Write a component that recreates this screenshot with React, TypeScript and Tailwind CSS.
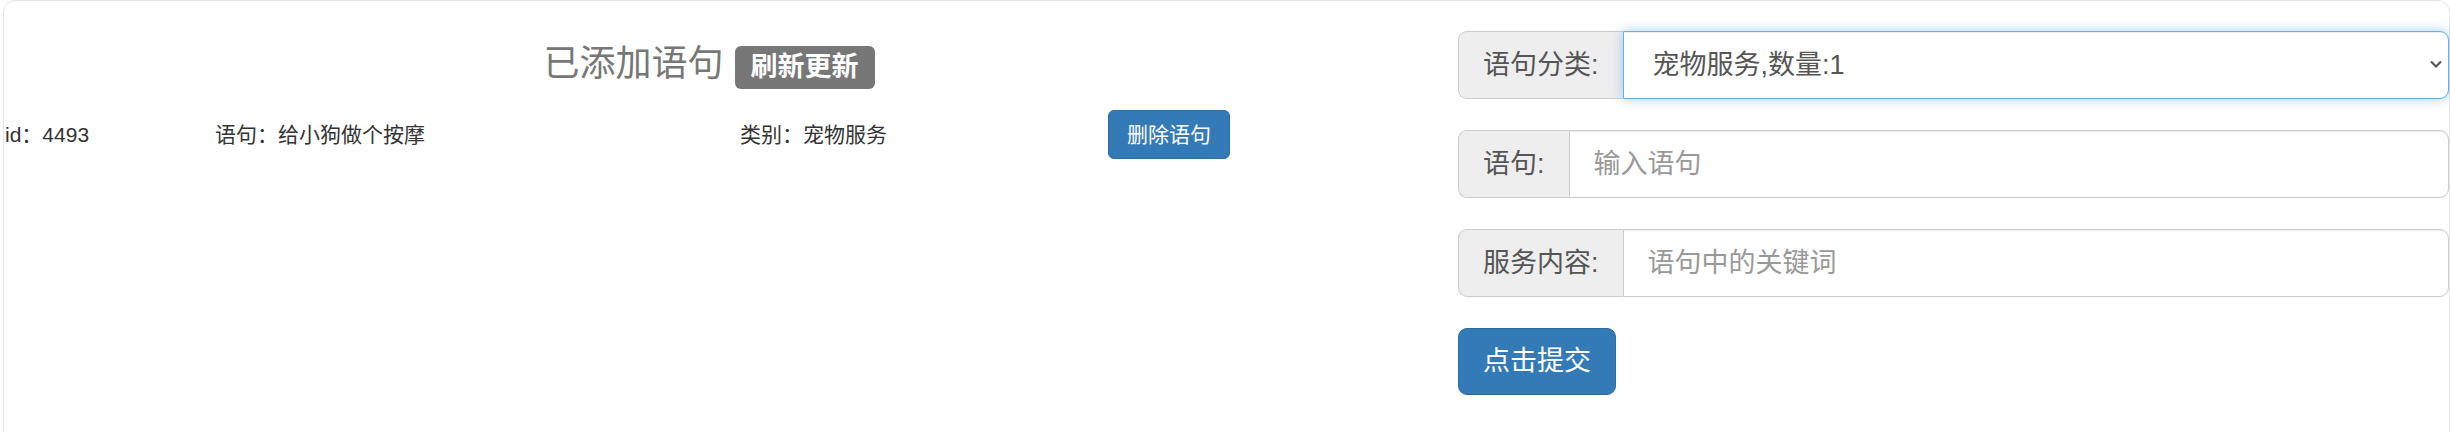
import { useState } from 'react';

const font = 'font-["Liberation_Sans","Noto_Sans_CJK_SC",sans-serif]';

type Sentence = { id: number; text: string; category: string };

const sentences: Sentence[] = [{ id: 4493, text: '给小狗做个按摩', category: '宠物服务' }];

const InputGroup = ({ label, children }: { label: string; children: React.ReactNode }) => (
  <div className="flex h-[68px]">
    <span className="flex items-center px-[24px] bg-[#eeeeee] border border-r-0 border-[#cccccc] rounded-l-[9px] text-[27px] text-[#555555] whitespace-nowrap">
      {label}
    </span>
    {children}
  </div>
);

export default function App() {
  const [category, setCategory] = useState('pet');
  const [sentence, setSentence] = useState('');
  const [keyword, setKeyword] = useState('');

  return (
    <div className={`${font} bg-white min-h-[432px]`}>
      <div className="ml-[3px] min-h-[460px] border border-[#e6e6e6] rounded-[12px] flex">
        {/* added sentences */}
        <div className="w-[1410px] shrink-0">
          <div className="mt-[45px] h-[43px] flex items-center justify-center gap-[11px]">
            <h3 className="text-[36px] leading-none text-[#777777] mb-[8px]">已添加语句</h3>
            <span className="h-[43px] px-[16px] flex items-center bg-[#777777] rounded-[6px] text-white text-[27px] font-bold leading-none">
              刷新更新
            </span>
          </div>
          {sentences.map(s => (
            <div key={s.id} className="mt-[21px] pl-[1px] h-[49px] flex items-center text-[21px] text-[#333333]">
              <span className="w-[210px] shrink-0">id：{s.id}</span>
              <span className="w-[525px] shrink-0">语句：{s.text}</span>
              <span className="w-[368px] shrink-0">类别：{s.category}</span>
              <button className="h-[49px] px-[18px] bg-[#337ab7] border border-[#2e6da4] rounded-[6px] text-white text-[21px]">
                删除语句
              </button>
            </div>
          ))}
        </div>

        {/* add form */}
        <div className="ml-[44px] flex-1 pt-[30px] flex flex-col gap-[31px]">
          <InputGroup label="语句分类:">
            <div className="relative flex-1">
              <select
                value={category}
                onChange={e => setCategory(e.target.value)}
                className="appearance-none w-full h-full pl-[29px] pr-[40px] bg-white border border-[#66afe9] rounded-r-[9px] text-[27px] text-[#555555] outline-none shadow-[inset_0_1px_1px_rgba(0,0,0,0.075),0_0_12px_rgba(102,175,233,0.6)]"
              >
                <option value="pet">宠物服务,数量:1</option>
              </select>
              <svg className="absolute right-[6px] top-[28px] w-[14px] h-[10px] pointer-events-none" viewBox="0 0 14 10">
                <polyline points="2,2.5 7,7.5 12,2.5" fill="none" stroke="#555555" strokeWidth="2.2" />
              </svg>
            </div>
          </InputGroup>
          <InputGroup label="语句:">
            <input
              value={sentence}
              onChange={e => setSentence(e.target.value)}
              placeholder="输入语句"
              className="flex-1 min-w-0 px-[24px] border border-[#cccccc] rounded-r-[9px] text-[27px] text-[#555555] placeholder:text-[#999999] outline-none shadow-[inset_0_1px_1px_rgba(0,0,0,0.075)]"
            />
          </InputGroup>
          <InputGroup label="服务内容:">
            <input
              value={keyword}
              onChange={e => setKeyword(e.target.value)}
              placeholder="语句中的关键词"
              className="flex-1 min-w-0 px-[24px] border border-[#cccccc] rounded-r-[9px] text-[27px] text-[#555555] placeholder:text-[#999999] outline-none shadow-[inset_0_1px_1px_rgba(0,0,0,0.075)]"
            />
          </InputGroup>
          <div>
            <button className="h-[67px] px-[24px] bg-[#337ab7] border border-[#2e6da4] rounded-[9px] text-white text-[27px]">
              点击提交
            </button>
          </div>
        </div>
      </div>
    </div>
  );
}
